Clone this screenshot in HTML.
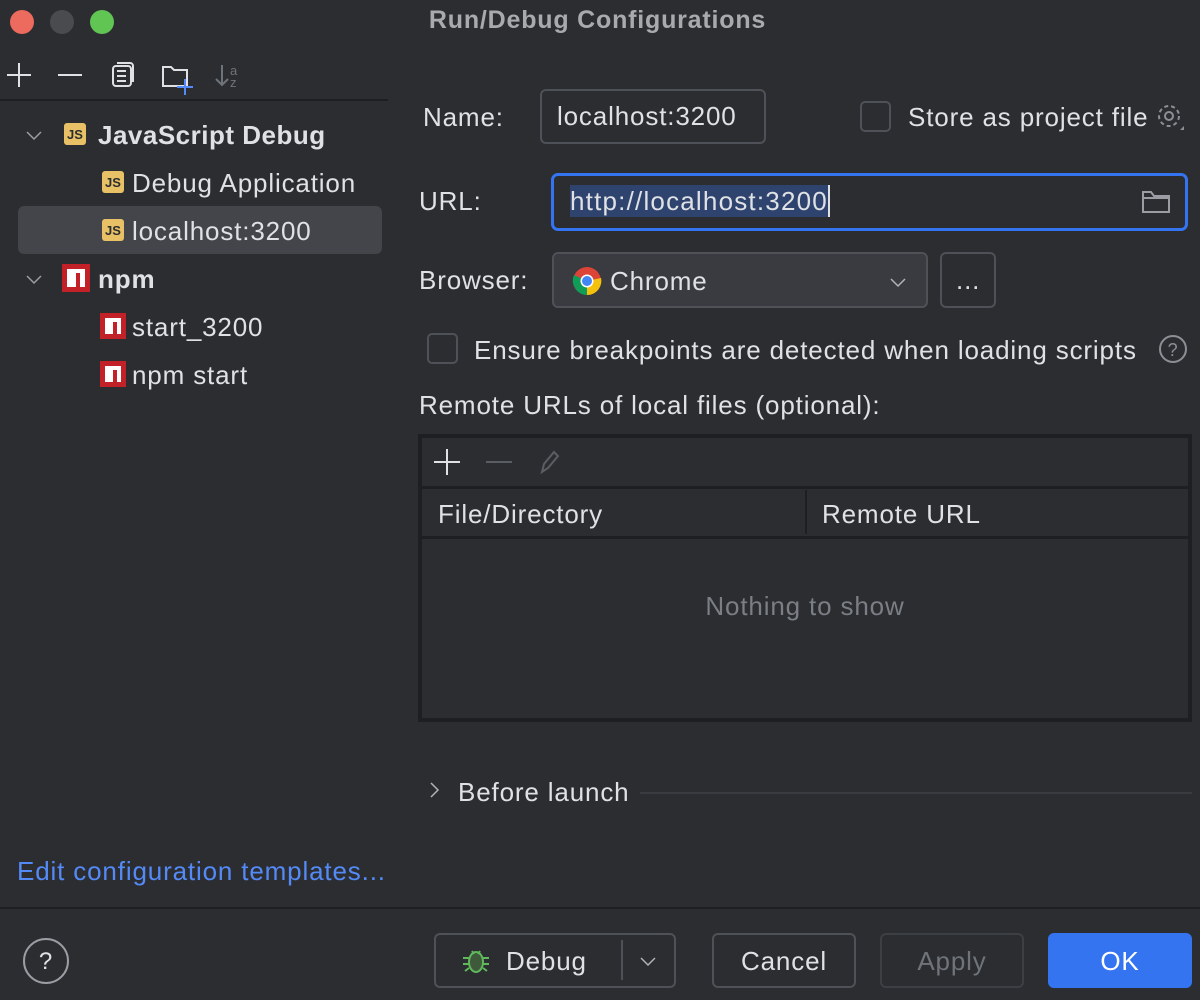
<!DOCTYPE html>
<html><head><style>
*{margin:0;padding:0;box-sizing:border-box}
body{width:1200px;height:1000px;background:#2b2d30;font-family:"Liberation Sans",sans-serif;color:#dfe1e5;position:relative;overflow:hidden;font-size:26px;letter-spacing:0.85px}
.a{position:absolute;white-space:nowrap}
.t{line-height:28px}
.js{position:absolute;width:22px;height:22px;background:#e8c166;border-radius:3px;color:#2b2d30;font-size:13px;letter-spacing:0;font-weight:bold;text-align:center;line-height:24px}
.np{position:absolute;width:28px;height:28px;background:#c12127;}
.np::after{content:"";position:absolute;left:5px;top:5px;width:18px;height:18px;background:#fff}
.np::before{content:"";position:absolute;left:14px;top:9px;width:4px;height:14px;background:#c12127;z-index:2}
.np.s{width:26px;height:26px}
.np.s::after{left:5px;top:5px;width:16px;height:16px}
.np.s::before{left:13px;top:9px;width:4px;height:12px}
.btn{position:absolute;border:2px solid #4e5157;border-radius:6px}
.cb{position:absolute;width:31px;height:31px;border:2px solid #4e5157;border-radius:5px}
</style></head><body>
<div class="a" style="left:10px;top:10px;width:24px;height:24px;border-radius:50%;background:#ed6a5e"></div>
<div class="a" style="left:50px;top:10px;width:24px;height:24px;border-radius:50%;background:#4a4b4e"></div>
<div class="a" style="left:90px;top:10px;width:24px;height:24px;border-radius:50%;background:#61c554"></div>
<div class="a t" style="left:0;width:1195px;text-align:center;top:6px;font-weight:bold;color:#a8aaae;font-size:25px;letter-spacing:0.8px">Run/Debug Configurations</div>

<svg class="a" style="left:0;top:55px" width="260" height="40" fill="none" stroke="#dfe1e5" stroke-width="2">
<path d="M7 20h24M19 8v24"/><path d="M58 20h24"/>
<rect x="113" y="11" width="18" height="20" rx="3"/><path d="M117 8h13a3 3 0 0 1 3 3v16"/><path d="M117 16h9M117 21h9M117 26h9"/>
<path d="M163 31V12h8l3 3h13v16z"/><path d="M185 24v16M177 32h16" stroke="#548af7"/>
<path d="M222 10v20M216 24l6 6 6-6" stroke="#6f737a"/>
<text x="230" y="20" font-size="13" fill="#6f737a" stroke="none" font-family="Liberation Sans">a</text>
<text x="230" y="32" font-size="13" fill="#6f737a" stroke="none" font-family="Liberation Sans">z</text>
</svg>
<div class="a" style="left:0;top:99px;width:388px;height:2px;background:#1e1f22"></div>

<svg class="a" style="left:24px;top:125px" width="20" height="20" fill="none" stroke="#9a9da3" stroke-width="1.5"><path d="M3 7l7 7 7-7"/></svg>
<div class="js" style="left:64px;top:123px">JS</div>
<div class="a t" style="left:98px;top:121px;font-weight:bold;letter-spacing:0.5px">JavaScript Debug</div>
<div class="js" style="left:102px;top:171px">JS</div>
<div class="a t" style="left:132px;top:169px">Debug Application</div>
<div class="a" style="left:18px;top:206px;width:364px;height:48px;border-radius:6px;background:#43454a"></div>
<div class="js" style="left:102px;top:219px">JS</div>
<div class="a t" style="left:132px;top:217px">localhost:3200</div>
<svg class="a" style="left:24px;top:269px" width="20" height="20" fill="none" stroke="#9a9da3" stroke-width="1.5"><path d="M3 7l7 7 7-7"/></svg>
<div class="np" style="left:62px;top:264px"></div>
<div class="a t" style="left:98px;top:265px;font-weight:bold">npm</div>
<div class="np s" style="left:100px;top:313px"></div>
<div class="a t" style="left:132px;top:313px">start_3200</div>
<div class="np s" style="left:100px;top:361px"></div>
<div class="a t" style="left:132px;top:361px">npm start</div>
<div class="a t" style="left:17px;top:857px;color:#548af7">Edit configuration templates...</div>

<div class="a t" style="left:423px;top:103px">Name:</div>
<div class="btn" style="left:540px;top:89px;width:226px;height:55px"></div>
<div class="a t" style="left:557px;top:102px">localhost:3200</div>
<div class="cb" style="left:860px;top:101px"></div>
<div class="a t" style="left:908px;top:103px">Store as project file</div>
<svg class="a" style="left:1156px;top:102px" width="30" height="30" fill="none" stroke="#8c8f95" stroke-width="2"><circle cx="13" cy="14" r="4"/><circle cx="13" cy="14" r="10" stroke-dasharray="4 3"/><path d="M24 28l4-4v4z" fill="#8c8f95" stroke="none"/></svg>

<div class="a t" style="left:419px;top:187px">URL:</div>
<div class="a" style="left:551px;top:173px;width:637px;height:58px;border:3px solid #3574f0;border-radius:7px"></div>
<div class="a" style="left:570px;top:185px;width:259px;height:32px;background:#2e436e"></div>
<div class="a" style="left:828px;top:185px;width:2px;height:32px;background:#dfe1e5"></div>
<div class="a t" style="left:570px;top:187px;letter-spacing:1.2px">http://localhost:3200</div>
<svg class="a" style="left:1140px;top:188px" width="32" height="28" fill="none" stroke="#9a9da3" stroke-width="2"><path d="M3 24V4h8l3 4h15v16z"/><path d="M3 10h26"/></svg>

<div class="a t" style="left:419px;top:266px">Browser:</div>
<div class="btn" style="left:552px;top:252px;width:376px;height:56px;background:#393b40"></div>
<svg class="a" style="left:572px;top:266px" width="30" height="30" viewBox="0 0 30 30"><circle cx="15" cy="15" r="14" fill="#db4437"/><path d="M15 15L3 22A14 14 0 0 0 15 29z" fill="#0f9d58"/><path d="M3 22A14 14 0 0 1 2 9L15 15z" fill="#0f9d58"/><path d="M15 15L29 12A14 14 0 0 1 15 29z" fill="#f4c20d"/><circle cx="15" cy="15" r="6.5" fill="#fff"/><circle cx="15" cy="15" r="5" fill="#4285f4"/></svg>
<div class="a t" style="left:610px;top:267px">Chrome</div>
<svg class="a" style="left:888px;top:272px" width="20" height="20" fill="none" stroke="#b0b3b8" stroke-width="1.5"><path d="M3 7l7 7 7-7"/></svg>
<div class="btn" style="left:940px;top:252px;width:56px;height:56px"></div>
<div class="a t" style="left:956px;top:266px">...</div>

<div class="cb" style="left:427px;top:333px"></div>
<div class="a t" style="left:474px;top:336px">Ensure breakpoints are detected when loading scripts</div>
<svg class="a" style="left:1158px;top:334px" width="30" height="30" fill="none" stroke="#8c8f95" stroke-width="2"><circle cx="15" cy="15" r="13"/><text x="15" y="22" font-size="18" text-anchor="middle" fill="#8c8f95" stroke="none" font-family="Liberation Sans">?</text></svg>

<div class="a t" style="left:419px;top:391px">Remote URLs of local files (optional):</div>
<div class="a" style="left:418px;top:434px;width:774px;height:288px;border:4px solid #1e1f22"></div>
<div class="a" style="left:420px;top:486px;width:770px;height:3px;background:#1e1f22"></div>
<div class="a" style="left:420px;top:536px;width:770px;height:3px;background:#1e1f22"></div>
<div class="a" style="left:805px;top:490px;width:2px;height:44px;background:#1e1f22"></div>
<svg class="a" style="left:430px;top:448px" width="140" height="30" fill="none" stroke-width="2"><path d="M4 14h26M17 1v26" stroke="#dfe1e5"/><path d="M56 14h26" stroke="#5a5d63"/><path d="M112 24l2-8 10-12 4 4-10 12z" stroke="#5a5d63"/></svg>
<div class="a t" style="left:438px;top:500px">File/Directory</div>
<div class="a t" style="left:822px;top:500px">Remote URL</div>
<div class="a t" style="left:420px;width:770px;text-align:center;top:592px;color:#7a7e85">Nothing to show</div>

<svg class="a" style="left:424px;top:780px" width="20" height="20" fill="none" stroke="#b0b3b8" stroke-width="1.5"><path d="M7 3l7 7-7 7"/></svg>
<div class="a t" style="left:458px;top:778px">Before launch</div>
<div class="a" style="left:640px;top:792px;width:552px;height:2px;background:#393b40"></div>

<div class="a" style="left:0;top:907px;width:1200px;height:2px;background:#1e1f22"></div>
<svg class="a" style="left:22px;top:937px" width="48" height="48" fill="none" stroke="#9a9da3" stroke-width="2"><circle cx="24" cy="24" r="22"/><text x="24" y="32" font-size="24" text-anchor="middle" fill="#dfe1e5" stroke="none" font-family="Liberation Sans">?</text></svg>
<div class="btn" style="left:434px;top:933px;width:242px;height:55px"></div>
<svg class="a" style="left:460px;top:944px" width="32" height="32" fill="none" stroke="#5fb85a" stroke-width="2"><ellipse cx="16" cy="18" rx="7" ry="10" fill="#3e5a3a"/><path d="M12 7l2 3M20 7l-2 3M3 14h6M23 14h6M3 20h6M23 20h6M5 27l4-3M27 27l-4-3"/></svg>
<div class="a t" style="left:506px;top:947px">Debug</div>
<div class="a" style="left:621px;top:940px;width:2px;height:40px;background:#4e5157"></div>
<svg class="a" style="left:638px;top:951px" width="20" height="20" fill="none" stroke="#b0b3b8" stroke-width="1.5"><path d="M3 7l7 7 7-7"/></svg>
<div class="btn" style="left:712px;top:933px;width:144px;height:55px"></div>
<div class="a t" style="left:712px;width:144px;text-align:center;top:947px">Cancel</div>
<div class="btn" style="left:880px;top:933px;width:144px;height:55px;border-color:#3c3f44"></div>
<div class="a t" style="left:880px;width:144px;text-align:center;top:947px;color:#6f737a">Apply</div>
<div class="a" style="left:1048px;top:933px;width:144px;height:55px;border-radius:6px;background:#3574f0"></div>
<div class="a t" style="left:1048px;width:144px;text-align:center;top:947px;color:#fff">OK</div>
</body></html>
